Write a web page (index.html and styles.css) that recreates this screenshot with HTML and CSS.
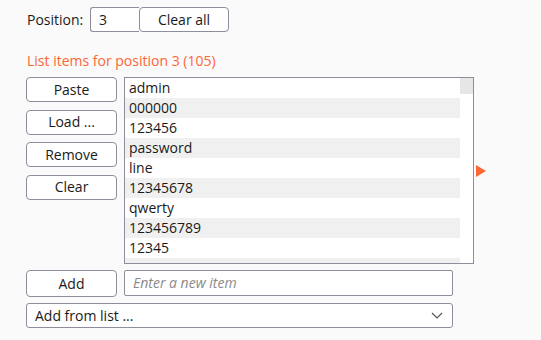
FILE: index.html
```html
<!DOCTYPE html>
<html>
<head>
<meta charset="utf-8">
<link rel="stylesheet" href="styles.css">
</head>
<body>
<div class="panel">
  <div class="position-row">
    <span class="label">Position:</span>
    <div class="position-input">3</div>
    <button class="btn clear-all">Clear all</button>
  </div>

  <div class="heading">List items for position 3 (105)</div>

  <div class="list-area">
    <div class="side-buttons">
      <button class="btn">Paste</button>
      <button class="btn">Load ...</button>
      <button class="btn">Remove</button>
      <button class="btn">Clear</button>
    </div>
    <div class="list-box">
      <div class="rows">
        <div class="row">admin</div>
        <div class="row">000000</div>
        <div class="row">123456</div>
        <div class="row">password</div>
        <div class="row">line</div>
        <div class="row">12345678</div>
        <div class="row">qwerty</div>
        <div class="row">123456789</div>
        <div class="row">12345</div>
        <div class="row">&nbsp;</div>
      </div>
      <div class="scrollbar"><div class="thumb"></div></div>
    </div>
    <div class="arrow"></div>
  </div>

  <div class="add-row">
    <button class="btn">Add</button>
    <div class="new-item">Enter a new item</div>
  </div>

  <div class="select">
    <span>Add from list ...</span>
    <svg width="12" height="7" viewBox="0 0 12 7"><path d="M1 1 L6 6 L11 1" fill="none" stroke="#555" stroke-width="1.2"/></svg>
  </div>
</div>
</body>
</html>
```

FILE: styles.css
```css
* {
    box-sizing: border-box;
}
body {
    margin: 0;
    background: #fafafa;
    font-family: "Open Sans", "Noto Sans", sans-serif;
    font-size: 14px;
    color: #1a1a1a;
}
.panel {
    padding: 7px 0 0 26px;
}
.btn {
    font: inherit;
    color: #1a1a1a;
    background: #fff;
    border: 1px solid #8e8d9b;
    border-radius: 4px;
    height: 25px;
    padding: 0;
    line-height: 22px;
}
.position-row {
    display: flex;
    align-items: center;
    height: 25px;
}
.label {
    width: 64px;
    padding-left: 1px;
}
.position-input {
    width: 49px;
    height: 25px;
    background: #fff;
    border: 1px solid #8e8d9b;
    border-right: none;
    border-radius: 3px 0 0 3px;
    padding-left: 8px;
    line-height: 23px;
}
.clear-all {
    width: 90px;
}
.heading {
    color: #ff6633;
    margin-top: 19px;
    line-height: 20px;
    padding-left: 1px;
}
.list-area {
    display: flex;
    margin-top: 6px;
}
.side-buttons {
    display: flex;
    flex-direction: column;
    gap: 7.5px;
    width: 91px;
    margin-right: 7px;
}
.list-box {
    display: flex;
    width: 350px;
    height: 187px;
    border: 1px solid #8e8d9b;
    background: #fff;
    overflow: hidden;
}
.rows {
    flex: 1;
}
.row {
    height: 20px;
    line-height: 20px;
    padding-left: 4px;
}
.row:nth-child(even) {
    background: #f0f0f0;
}
.scrollbar {
    width: 13px;
    background: #fff;
}
.thumb {
    height: 16px;
    background: #e6e6e6;
}
.arrow {
    align-self: center;
    margin-left: 2px;
    width: 0;
    height: 0;
    border-left: 10px solid #ff6633;
    border-top: 6.5px solid transparent;
    border-bottom: 6.5px solid transparent;
}
.add-row {
    display: flex;
    margin-top: 6px;
    height: 27px;
}
.add-row .btn {
    width: 91px;
    height: 27px;
    margin-right: 7px;
    line-height: 24px;
}
.new-item {
    width: 329px;
    height: 26px;
    background: #fff;
    border: 1px solid #8e8d9b;
    border-radius: 2px;
    padding-left: 8px;
    line-height: 24px;
    font-style: italic;
    color: #8a8a8a;
}
.select {
    display: flex;
    align-items: center;
    justify-content: space-between;
    margin-top: 6px;
    width: 427px;
    height: 25px;
    background: #fff;
    border: 1px solid #8e8d9b;
    border-radius: 3px;
    padding: 0 9px 0 8px;
}
```
